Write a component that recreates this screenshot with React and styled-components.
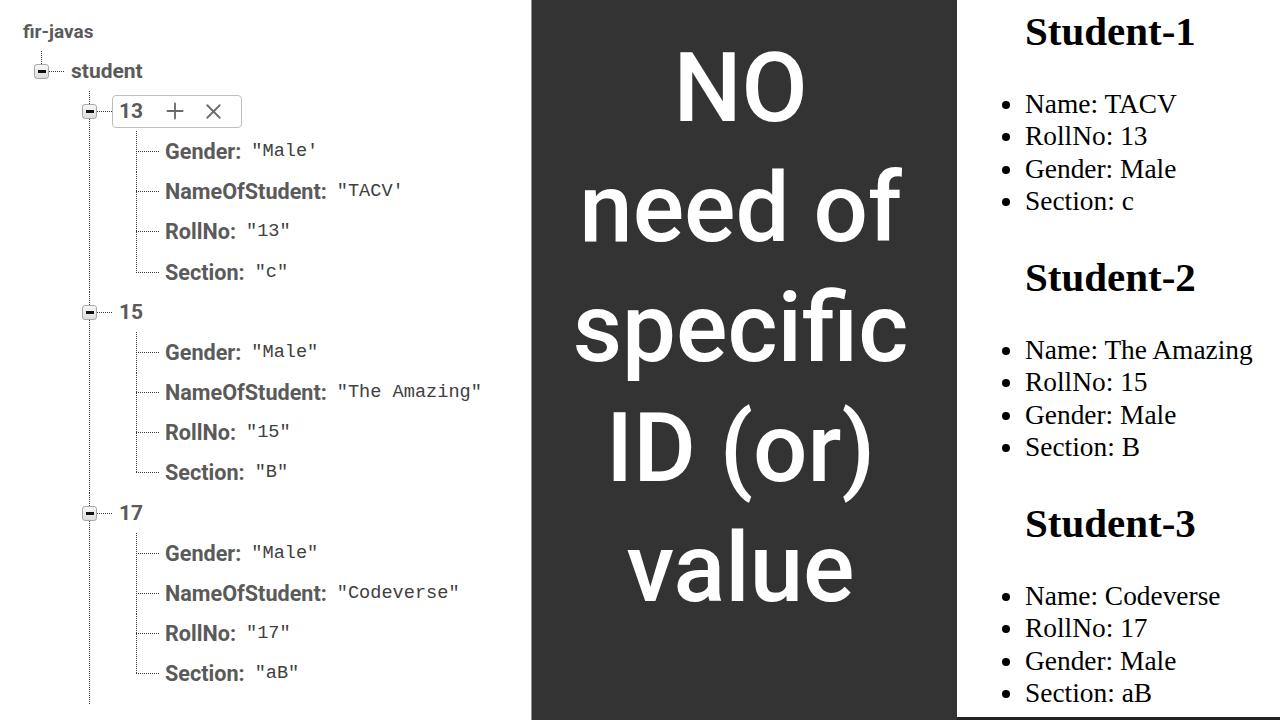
import React from "react";
import styled, { createGlobalStyle } from "styled-components";
import { Plus, X } from "lucide-react";

const GlobalStyle = createGlobalStyle`
  html, body {
    margin: 0;
    padding: 0;
    background: #fff;
    overflow: hidden;
  }
`;

const students = [
  {
    id: "13",
    selected: true,
    fields: [
      ["Gender", "\"Male'"],
      ["NameOfStudent", "\"TACV'"],
      ["RollNo", '"13"'],
      ["Section", '"c"'],
    ],
  },
  {
    id: "15",
    fields: [
      ["Gender", '"Male"'],
      ["NameOfStudent", '"The Amazing"'],
      ["RollNo", '"15"'],
      ["Section", '"B"'],
    ],
  },
  {
    id: "17",
    fields: [
      ["Gender", '"Male"'],
      ["NameOfStudent", '"Codeverse"'],
      ["RollNo", '"17"'],
      ["Section", '"aB"'],
    ],
  },
];

const cards = [
  { title: "Student-1", name: "TACV", roll: "13", gender: "Male", section: "c" },
  { title: "Student-2", name: "The Amazing", roll: "15", gender: "Male", section: "B" },
  { title: "Student-3", name: "Codeverse", roll: "17", gender: "Male", section: "aB" },
];

const headline = ["NO", "need of", "specific", "ID (or)", "value"];

const Page = styled.div`
  display: grid;
  grid-template-columns: 531px 426px 1fr;
  width: 1280px;
  height: 720px;
`;

/* ---------- firebase tree ---------- */

const TreePanel = styled.div`
  padding: 11px 0 0 23px;
  font-family: Roboto, "Liberation Sans", sans-serif;
  color: #5a5a5a;
`;

const RootLabel = styled.div`
  height: 40px;
  display: flex;
  align-items: center;
  font-size: 19px;
  font-weight: 700;
`;

const ChildList = styled.ul`
  list-style: none;
  margin: 0 0 0 ${(p) => p.$indent}px;
  padding: 0;
`;

const Item = styled.li`
  background-image: repeating-linear-gradient(to bottom, #3a3a3a 0 1px, transparent 1px 2px);
  background-repeat: no-repeat;
  background-position: left top;
  background-size: 1px ${(p) => (p.$last ? "20px" : "100%")};
  padding-bottom: ${(p) => (p.$tail ? 11 : 0)}px;
`;

const Row = styled.div`
  height: 40.2px;
  display: flex;
  align-items: center;
`;

const Dash = styled.span`
  flex: none;
  width: ${(p) => p.$w}px;
  height: 1px;
  background-image: repeating-linear-gradient(to right, #3a3a3a 0 1px, transparent 1px 2px);
`;

const Toggle = styled.span`
  flex: none;
  box-sizing: border-box;
  width: 15px;
  height: 15px;
  margin-left: -7px;
  border: 1px solid #a8a8a8;
  border-radius: 3px;
  background: linear-gradient(#f7f7f7, #dcdcdc);
  display: flex;
  align-items: center;
  justify-content: center;

  &::after {
    content: "";
    width: 8px;
    height: 3px;
    background: #111;
  }
`;

const NodeLabel = styled.span`
  padding-left: 7px;
  font-size: 21px;
  font-weight: 700;
  color: #5a5a5a;
`;

const SelectedBox = styled.span`
  box-sizing: border-box;
  height: 33px;
  width: 130px;
  display: flex;
  align-items: center;
  padding-left: 6px;
  border: 1px solid #bdbdbd;
  border-radius: 4px;
  font-size: 21px;
  font-weight: 700;
  color: #5a5a5a;

  svg {
    color: #6a6a6a;
  }
`;

const BoxActions = styled.span`
  display: flex;
  align-items: center;
  gap: 13px;
  margin-left: 19px;
`;

const Key = styled.span`
  margin-left: 5px;
  font-size: 21.6px;
  font-weight: 700;
  color: #5a5a5a;
`;

const Value = styled.span`
  margin-left: 10px;
  font-family: "Liberation Mono", "DejaVu Sans Mono", monospace;
  font-size: 18.6px;
  color: #404040;
`;

function FieldItem({ name, value, last }) {
  return (
    <Item $last={last}>
      <Row>
        <Dash $w={24} />
        <Key>{name}:</Key>
        <Value>{value}</Value>
      </Row>
    </Item>
  );
}

function StudentNode({ student, last, tail }) {
  return (
    <Item $last={last} $tail={tail}>
      <Row>
        <Toggle />
        <Dash $w={15} />
        {student.selected ? (
          <SelectedBox>
            {student.id}
            <BoxActions>
              <Plus size={26} strokeWidth={1.7} />
              <X size={25} strokeWidth={1.7} />
            </BoxActions>
          </SelectedBox>
        ) : (
          <NodeLabel>{student.id}</NodeLabel>
        )}
      </Row>
      <ChildList $indent={47}>
        {student.fields.map(([k, v], i) => (
          <FieldItem key={k} name={k} value={v} last={i === student.fields.length - 1} />
        ))}
      </ChildList>
    </Item>
  );
}

function Tree() {
  return (
    <TreePanel>
      <RootLabel>fir-javas</RootLabel>
      <ChildList $indent={18}>
        <Item $last>
          <Row>
            <Toggle />
            <Dash $w={15} />
            <NodeLabel>student</NodeLabel>
          </Row>
          <ChildList $indent={48}>
            {students.map((s, i) => (
              <StudentNode key={s.id} student={s} tail={i === students.length - 1} />
            ))}
          </ChildList>
        </Item>
      </ChildList>
    </TreePanel>
  );
}

/* ---------- middle slide ---------- */

const Slide = styled.div`
  box-sizing: border-box;
  background: #333333;
  border-left: 1px solid #8c8c8c;
  padding-top: 28px;
  text-align: center;
  font-family: Roboto, "Noto Sans", sans-serif;
  font-weight: 500;
  font-size: 96px;
  color: #ffffff;
`;

const SlideLine = styled.div`
  line-height: 120px;
  white-space: nowrap;
  padding-right: 8px;
`;

/* ---------- rendered output ---------- */

const Output = styled.div`
  box-sizing: border-box;
  height: 720px;
  padding: 7px 0 0 68px;
  border-bottom: 3px solid #222;
  font-family: "Liberation Serif", "Times New Roman", serif;
  color: #000;
`;

const CardTitle = styled.h2`
  margin: 0;
  font-size: 41px;
  line-height: 48px;
  font-weight: 700;
`;

const FieldList = styled.ul`
  margin: 32.6px 0 35.4px;
  padding: 0;
  list-style: disc outside;
`;

const Field = styled.li`
  font-size: 27.4px;
  line-height: 32.5px;
  white-space: nowrap;
`;

export default function App() {
  return (
    <>
      <GlobalStyle />
      <Page>
        <Tree />
        <Slide>
          {headline.map((line) => (
            <SlideLine key={line}>{line}</SlideLine>
          ))}
        </Slide>
        <Output>
          {cards.map((c) => (
            <div key={c.title}>
              <CardTitle>{c.title}</CardTitle>
              <FieldList>
                <Field>Name: {c.name}</Field>
                <Field>RollNo: {c.roll}</Field>
                <Field>Gender: {c.gender}</Field>
                <Field>Section: {c.section}</Field>
              </FieldList>
            </div>
          ))}
        </Output>
      </Page>
    </>
  );
}
